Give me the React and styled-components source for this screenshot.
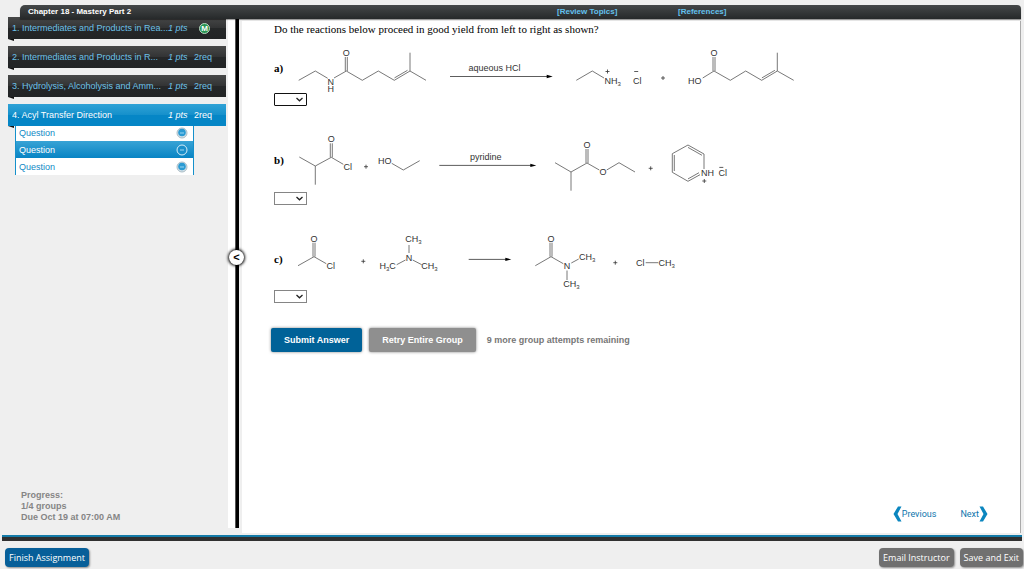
import React, { useState } from 'react';
import styled, { createGlobalStyle, css } from 'styled-components';

const GlobalStyle = createGlobalStyle`
  * {
    box-sizing: border-box;
  }
  body {
    margin: 0;
    background: #efefef;
    font-family: "Liberation Sans", Arial, sans-serif;
  }
  a {
    text-decoration: none;
  }
`;

const Page = styled.div`
  display: flex;
  flex-direction: column;
  min-height: 100vh;
  padding-top: 5px;
`;

const Header = styled.header`
  position: relative;
  z-index: 2;
  display: grid;
  grid-template-columns: 537fr 121fr 343fr;
  align-items: center;
  height: 14px;
  margin: 0 3px 0 20px;
  background: linear-gradient(#454849, #26292a);
  border-radius: 5px 4px 0 0;
  box-shadow: 0 1px 1px rgba(0, 0, 0, 0.4);
`;

const Title = styled.h1`
  margin: 0;
  padding-left: 8px;
  color: #fff;
  font-size: 8px;
  line-height: 14px;
`;

const HeaderLink = styled.a`
  color: #63c1ee;
  font-size: 8px;
  font-weight: bold;
  line-height: 14px;
`;

const Main = styled.div`
  display: flex;
  flex: 1;
  margin-right: 3px;
`;

const Sidebar = styled.nav`
  display: flex;
  flex-direction: column;
  width: 228px;
  margin-top: -2px;
  padding: 0 2px 10px 8px;
`;

const Group = styled.div`
  margin-bottom: 7px;
`;

const GroupLink = styled.a`
  position: relative;
  z-index: 1;
  display: grid;
  grid-template-columns: 1fr 26px 32px;
  align-items: center;
  height: 22px;
  padding-left: 4px;
  color: ${({ $active }) => ($active ? '#fff' : '#6cc1e8')};
  background: ${({ $active }) =>
    $active
      ? 'linear-gradient(#30a2d6, #1590cb 50%, #0586c6 52%, #0586c6)'
      : 'linear-gradient(#474848, #323334 50%, #252728 52%, #222425)'};
  font-size: 9px;
  line-height: 12px;

  &::after {
    content: "";
    position: absolute;
    top: 22px;
    left: 0;
    border-top: 2px solid #111;
    border-left: 6px solid transparent;
  }
`;

const GroupName = styled.span`
  overflow: hidden;
  white-space: nowrap;
`;

const Points = styled.em`
  white-space: nowrap;
`;

const Mastered = styled.span`
  display: flex;
  align-items: center;
  justify-content: center;
  width: 11px;
  height: 11px;
  margin-left: 5px;
  border: 1px solid #b9d8c2;
  border-radius: 50%;
  background: #279552;
  color: #fff;
  font-size: 8px;
  font-weight: bold;
  line-height: 9px;
`;

const QuestionList = styled.ul`
  width: 179px;
  margin: -2px 0 0 7px;
  padding: 0;
  border: solid #1590cb;
  border-width: 0 1px;
  list-style: none;
`;

const QuestionLink = styled.a`
  display: flex;
  align-items: center;
  justify-content: space-between;
  height: 17px;
  padding: 0 5px 0 3px;
  color: #1089c5;
  background: #fff;
  font-size: 9px;
  line-height: 12px;
  ${({ $current }) =>
    $current &&
    css`
      color: #fff;
      background: linear-gradient(#38a3d5, #0884c4);
    `}
`;

const Progress = styled.p`
  margin: auto 0 0 13px;
  color: #858585;
  font-size: 9px;
  font-weight: bold;
  line-height: 11px;
`;

const Divider = styled.div`
  position: relative;
  z-index: 1;
  display: flex;
  align-items: center;
  justify-content: center;
  width: 14px;
  margin-bottom: 5px;
  background: linear-gradient(to right, #fff 7px, #555 7px, #555 8px, #000 8px, #000 11px, #efefef 11px);
`;

const Collapse = styled.button`
  flex: none;
  width: 15px;
  height: 15px;
  margin: 0 0 32px 3px;
  padding: 0;
  border: 0;
  border-radius: 50%;
  background: #fff;
  box-shadow: 0 0 3px 1px #000;
  color: #000;
  font-family: inherit;
  font-size: 11px;
  font-weight: bold;
  line-height: 15px;
`;

const Content = styled.main`
  display: flex;
  flex: 1;
  flex-direction: column;
  margin-top: 2px;
  padding: 0 32px 11px 32px;
  background: #fff;
  border-right: 1px solid #aaa;
`;

const Prompt = styled.p`
  margin: 0;
  color: #000;
  font-family: "Liberation Serif", "Times New Roman", serif;
  font-size: 11px;
  line-height: 16px;
`;

const Reactions = styled.div`
  display: flex;
  flex-direction: column;
  gap: 22px;
  margin-top: 6px;
`;

const Reaction = styled.section`
  display: flex;
  flex-direction: column;
  align-items: flex-start;
`;

const Equation = styled.div`
  display: flex;
  align-items: center;
`;

const Label = styled.label`
  width: 16px;
  font-family: "Liberation Serif", "Times New Roman", serif;
  font-size: 11px;
  font-weight: bold;
  line-height: 14px;
`;

const Scheme = styled.svg`
  display: block;
  overflow: visible;
  fill: none;
  stroke: #555;
  stroke-width: 0.8;

  text {
    fill: #333;
    stroke: none;
    font-family: "Liberation Sans", Arial, sans-serif;
    font-size: 9px;
  }
  .sub {
    font-size: 6px;
  }
`;

const SelectBox = styled.div`
  display: flex;
  position: relative;
  width: 33px;
  height: 13px;

  svg {
    position: absolute;
    top: 4px;
    right: 4px;
    pointer-events: none;
  }
`;

const Select = styled.select`
  width: 100%;
  height: 100%;
  padding: 0 12px 0 2px;
  appearance: none;
  border: 1px solid ${({ $focused }) => ($focused ? '#111' : '#858585')};
  border-radius: ${({ $focused }) => ($focused ? '1px' : '0')};
  background: #fff;
  font-size: 9px;
`;

const Actions = styled.div`
  display: flex;
  align-items: center;
  gap: 7px;
  margin: 25px 0 0 -3px;
`;

const ActionButton = styled.button`
  height: 24px;
  padding: 0 13px;
  border: 0;
  border-radius: 2px;
  background: ${({ $primary }) => ($primary ? '#006298' : '#8f8f8f')};
  box-shadow: 0 0 3px rgba(0, 0, 0, 0.5);
  color: #fff;
  font-family: inherit;
  font-size: 9px;
  font-weight: bold;
`;

const Attempts = styled.span`
  margin-left: 4px;
  color: #777;
  font-size: 9px;
  font-weight: bold;
`;

const Pager = styled.div`
  display: flex;
  justify-content: flex-end;
  gap: 24px;
  margin-top: auto;
`;

const PagerLink = styled.a`
  display: flex;
  align-items: center;
  color: #0e76ad;
  font-family: Roboto, sans-serif;
  font-size: 9px;
  line-height: 16px;
`;

const Rule = styled.div`
  height: 6px;
  margin: 2px 2px 0;
  border-top: 2px solid #147ba8;
  background: #303030;
`;

const Footer = styled.footer`
  display: flex;
  align-items: center;
  gap: 6px;
  height: 28px;
  padding: 4px 1px 0 5px;
`;

const FooterButton = styled.button`
  height: 19px;
  padding: 0 4px;
  border: 0;
  border-radius: 4px;
  background: ${({ $primary }) => ($primary ? '#075f99' : '#707070')};
  box-shadow: 1px 1px 2px rgba(0, 0, 0, 0.4);
  color: #fff;
  font-family: "Open Sans", sans-serif;
  font-size: 9px;
  line-height: 19px;
  ${({ $primary }) => $primary && 'margin-right: auto;'}
`;

function StatusDot({ current }) {
  return (
    <svg width="12" height="12" viewBox="0 0 12 12">
      <circle cx="6" cy="6" r="5" fill={current ? '#1b8fca' : '#d8e3e8'} stroke={current ? '#d5edf8' : '#a9bcc6'} />
      {!current && <circle cx="6" cy="5.5" r="3.8" fill="#2c9bd3" />}
      <path d="M4 6h4" stroke="#9bd6f2" />
    </svg>
  );
}

function Chevron({ right }) {
  return (
    <svg width="9" height="16" viewBox="0 0 9 16">
      <path d={right ? 'M0.5 0.5H4L8.5 8L4 15.5H0.5L4.5 8z' : 'M8.5 0.5H5L0.5 8L5 15.5H8.5L4.5 8z'} fill="#0b86bf" />
    </svg>
  );
}

function Plus({ x, y }) {
  return <path d={`M${x - 2} ${y}h4M${x} ${y - 2}v4`} stroke="#333" />;
}

function Minus({ x, y }) {
  return <path d={`M${x - 2} ${y}h4`} stroke="#333" />;
}

function Arrow({ from, to, y }) {
  return (
    <>
      <path d={`M${from} ${y}H${to - 4}`} stroke="#333" />
      <path d={`M${to} ${y}l-6 -1.7v3.4z`} fill="#000" stroke="none" />
    </>
  );
}

// Carbonyl oxygen drawn above the carbon at x, y
function Carbonyl({ x, y }) {
  return (
    <>
      <path d={`M${x - 1} ${y}v-14M${x + 1} ${y}v-14`} />
      <text x={x} y={y - 15} textAnchor="middle">O</text>
    </>
  );
}

function Methyl({ x, y }) {
  return (
    <text x={x} y={y}>CH<tspan className="sub" dy="2">3</tspan></text>
  );
}

function AmideScheme() {
  return (
    <Scheme width="510" height="50" viewBox="0 0 510 50">
      <path d="M8.7 37.3L25.3 28L37.7 35.3M44 35L56.3 28L72.3 37.3L88.3 28L104.3 37.3L120 28V9.7M120 28L136 37.3M104.5 34.9L117.5 27.3" />
      <Carbonyl x={56.3} y={28} />
      <text x="40.7" y="41.5" textAnchor="middle">N</text>
      <text x="40.7" y="48.5" textAnchor="middle">H</text>
      <text x="204.5" y="27.5" textAnchor="middle">aqueous HCl</text>
      <Arrow from={160} to={262.7} y={33.5} />
      <path d="M286.3 37.3L302.3 28L314 35" />
      <text x="314.5" y="40.5">NH<tspan className="sub" dy="2">3</tspan></text>
      <Plus x={317.5} y={28.5} />
      <text x="343" y="40.5">Cl</text>
      <Minus x={346.2} y={28.5} />
      <Plus x={373} y={35} />
      <text x="398" y="40.5">HO</text>
      <path d="M412.7 35L424 28L440.3 37.3L455.7 28L471.7 37.3L487.3 28V9.7M487.3 28L503.7 37.3M471.9 34.9L484.9 27.3" />
      <Carbonyl x={424} y={28} />
    </Scheme>
  );
}

function EsterScheme() {
  return (
    <Scheme width="510" height="64" viewBox="0 0 510 64">
      <path d="M9.3 29L25.3 38L41.3 29.3L53.3 36.3M25.3 38V56.7" />
      <Carbonyl x={41.3} y={29.3} />
      <text x="53.5" y="41.7">Cl</text>
      <Plus x={76} y={38.7} />
      <text x="88" y="36.3">HO</text>
      <path d="M101.7 35.3L113.3 42L129.7 32.7" />
      <text x="195.7" y="31.5" textAnchor="middle">pyridine</text>
      <Arrow from={149.3} to={246.3} y={37.4} />
      <path d="M265 34.7L281 44L297 35L309.3 42M281 44V62.7M316.7 42L329 34.7L345 44" />
      <Carbonyl x={297} y={35} />
      <text x="313" y="47.4" textAnchor="middle">O</text>
      <Plus x={360.7} y={40.3} />
      <path d="M410 46.7L398 53.3L382.3 44.3V25.7L398 17L414 26V41M384.3 43V27M398 19.4L412 27.3M398 50.9L409 44.7" />
      <text x="411" y="48.2">NH</text>
      <Plus x={414.3} y={53} />
      <text x="428.5" y="48.2">Cl</text>
      <Minus x={431.3} y={39.4} />
    </Scheme>
  );
}

function AmineScheme() {
  return (
    <Scheme width="510" height="63" viewBox="0 0 510 63">
      <path d="M8 38.7L24 29.7L36.3 36.7" />
      <Carbonyl x={24} y={29.7} />
      <text x="36.5" y="42">Cl</text>
      <Plus x={73.3} y={34.3} />
      <Methyl x={115.2} y={15} />
      <text x="119" y="33.8" textAnchor="middle">N</text>
      <path d="M119 18V26M115.5 33L106.7 37.7M122.7 33L131.7 37.7" />
      <text x="89.5" y="42.3">H<tspan className="sub" dy="2">3</tspan><tspan dy="-2">C</tspan></text>
      <Methyl x={131.3} y={42.3} />
      <Arrow from={178.7} to={221.3} y={32.4} />
      <path d="M245.3 38.7L261 29.7L273.3 36.7M281.3 36L288.7 32M277 43.5V53" />
      <Carbonyl x={261} y={29.7} />
      <text x="277" y="42.4" textAnchor="middle">N</text>
      <Methyl x={289} y={33.3} />
      <Methyl x={273.3} y={60.2} />
      <Plus x={325.3} y={35.7} />
      <text x="346" y="39">Cl</text>
      <path d="M355.7 35.7H368.3" />
      <Methyl x={368.5} y={39} />
    </Scheme>
  );
}

const groups = [
  { name: '1. Intermediates and Products in Rea...', mastered: true },
  { name: '2. Intermediates and Products in R...' },
  { name: '3. Hydrolysis, Alcoholysis and Amm...' },
  { name: '4. Acyl Transfer Direction', active: true },
];

const reactions = [
  { id: 'a', Drawing: AmideScheme },
  { id: 'b', Drawing: EsterScheme },
  { id: 'c', Drawing: AmineScheme },
];

function App() {
  const [answers, setAnswers] = useState({ a: '', b: '', c: '' });

  return (
    <Page>
      <GlobalStyle />
      <Header>
        <Title>Chapter 18 - Mastery Part 2</Title>
        <HeaderLink href="#topics">[Review Topics]</HeaderLink>
        <HeaderLink href="#references">[References]</HeaderLink>
      </Header>
      <Main>
        <Sidebar>
          {groups.map((group) => (
            <Group key={group.name}>
              <GroupLink href="#group" $active={group.active}>
                <GroupName>{group.name}</GroupName>
                <Points>1 pts</Points>
                {group.mastered ? <Mastered>M</Mastered> : <span>2req</span>}
              </GroupLink>
              {group.active && (
                <QuestionList>
                  {[1, 2, 3].map((n) => (
                    <li key={n}>
                      <QuestionLink href="#question" $current={n === 2}>
                        Question
                        <StatusDot current={n === 2} />
                      </QuestionLink>
                    </li>
                  ))}
                </QuestionList>
              )}
            </Group>
          ))}
          <Progress>
            Progress:
            <br />
            1/4 groups
            <br />
            Due Oct 19 at 07:00 AM
          </Progress>
        </Sidebar>
        <Divider>
          <Collapse type="button" aria-label="Collapse sidebar">&lt;</Collapse>
        </Divider>
        <Content>
          <Prompt>Do the reactions below proceed in good yield from left to right as shown?</Prompt>
          <Reactions>
            {reactions.map(({ id, Drawing }) => (
              <Reaction key={id}>
                <Equation>
                  <Label htmlFor={`answer-${id}`}>{id})</Label>
                  <Drawing />
                </Equation>
                <SelectBox>
                  <Select
                    id={`answer-${id}`}
                    $focused={id === 'a'}
                    value={answers[id]}
                    onChange={(e) => setAnswers({ ...answers, [id]: e.target.value })}
                  >
                    <option value="" />
                    <option value="yes">Yes</option>
                    <option value="no">No</option>
                  </Select>
                  <svg width="7" height="5" viewBox="0 0 7 5">
                    <path d="M0.5 1l3 2.8L6.5 1" fill="none" stroke="#222" strokeWidth="1.3" />
                  </svg>
                </SelectBox>
              </Reaction>
            ))}
          </Reactions>
          <Actions>
            <ActionButton type="button" $primary>Submit Answer</ActionButton>
            <ActionButton type="button">Retry Entire Group</ActionButton>
            <Attempts>9 more group attempts remaining</Attempts>
          </Actions>
          <Pager>
            <PagerLink href="#previous">
              <Chevron />
              Previous
            </PagerLink>
            <PagerLink href="#next">
              Next
              <Chevron right />
            </PagerLink>
          </Pager>
        </Content>
      </Main>
      <Rule />
      <Footer>
        <FooterButton type="button" $primary>Finish Assignment</FooterButton>
        <FooterButton type="button">Email Instructor</FooterButton>
        <FooterButton type="button">Save and Exit</FooterButton>
      </Footer>
    </Page>
  );
}

export default App;
